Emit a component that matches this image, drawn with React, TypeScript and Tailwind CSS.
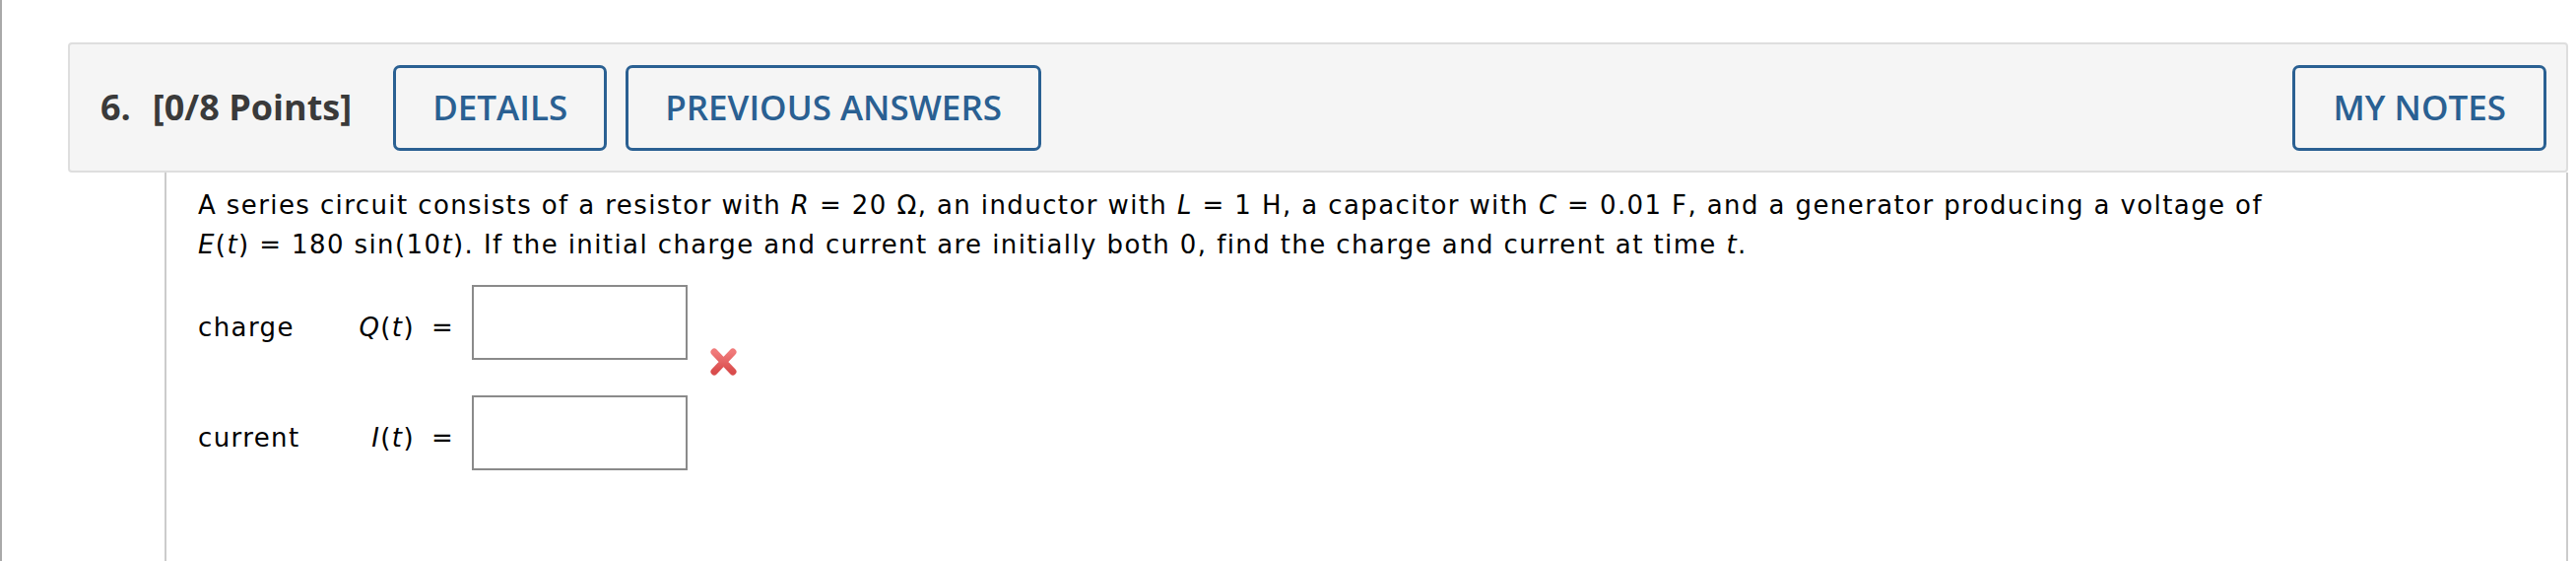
export default function App() {
  const body = { fontFamily: '"DejaVu Sans", Verdana, sans-serif' }
  const head = { fontFamily: '"Open Sans", "Noto Sans", sans-serif' }

  return (
    <div className="flex h-[569px] w-[2615px] flex-col border-l-2 border-[#a9a9a9] bg-white pl-[67px] pr-[8px] pt-[43px]">
      {/* Question header */}
      <div
        style={head}
        className="flex h-[132px] shrink-0 items-center rounded-[4px] border-2 border-[#dedede] bg-[#f5f5f5] pl-[31px] pr-[20px]"
      >
        <span className="text-[36px] font-bold text-[#3a3a3a]">6.</span>
        <span className="ml-[22px] text-[36px] font-bold text-[#3a3a3a]">[0/8 Points]</span>
        <button className="ml-[42px] h-[87px] rounded-[7px] border-[3px] border-[#2a6092] px-[37px] text-[35px] font-semibold text-[#2a6092]">
          DETAILS
        </button>
        <button className="ml-[19px] h-[87px] rounded-[7px] border-[3px] border-[#2a6092] px-[37px] text-[35px] font-semibold text-[#2a6092]">
          PREVIOUS ANSWERS
        </button>
        <button className="ml-auto h-[87px] rounded-[7px] border-[3px] border-[#2a6092] px-[38px] text-[35px] font-semibold text-[#2a6092]">
          MY NOTES
        </button>
      </div>

      {/* Question body */}
      <div
        style={body}
        className="ml-[98px] flex-1 border-x-2 border-[#cccccc] pl-[32px] pt-[13px] tracking-[1.4px] text-black"
      >
        <p className="text-[26px] leading-[40px]">
          A series circuit consists of a resistor with <i>R</i> = 20 Ω, an inductor with <i>L</i> = 1 H, a capacitor
          with <i>C</i> = 0.01 F, and a generator producing a voltage of
          <br />
          <i>E</i>(<i>t</i>) = 180 sin(10<i>t</i>). If the initial charge and current are initially both 0, find the
          charge and current at time <i>t</i>.
        </p>

        <div className="mt-[21px] flex">
          <div className="flex flex-col gap-[36px] text-[26px] leading-[40px]">
            {[
              { label: 'charge', fn: 'Q' },
              { label: 'current', fn: 'I' },
            ].map(({ label, fn }) => (
              <div key={label} className="flex h-[76px] items-center">
                <span className="mt-[9px] w-[150px]">{label}</span>
                <span className="mt-[9px] w-[70px] text-right">
                  <i>{fn}</i>(<i>t</i>)
                </span>
                <span className="mt-[9px] ml-[17px]">=</span>
                <input
                  type="text"
                  className="ml-[18px] h-[76px] w-[219px] border-2 border-[#8a8a8a] bg-white outline-none"
                />
              </div>
            ))}
          </div>

          <svg width="29" height="28" viewBox="0 0 29 28" className="ml-[22px] mt-[64px]">
            <defs>
              <linearGradient id="xg" x1="0" y1="0" x2="0" y2="1">
                <stop offset="0" stopColor="#f07a7a" />
                <stop offset="1" stopColor="#d94c4c" />
              </linearGradient>
            </defs>
            <path d="M5 4 L24 24 M24 4 L5 24" stroke="url(#xg)" strokeWidth="7" strokeLinecap="round" fill="none" />
          </svg>
        </div>
      </div>
    </div>
  )
}
